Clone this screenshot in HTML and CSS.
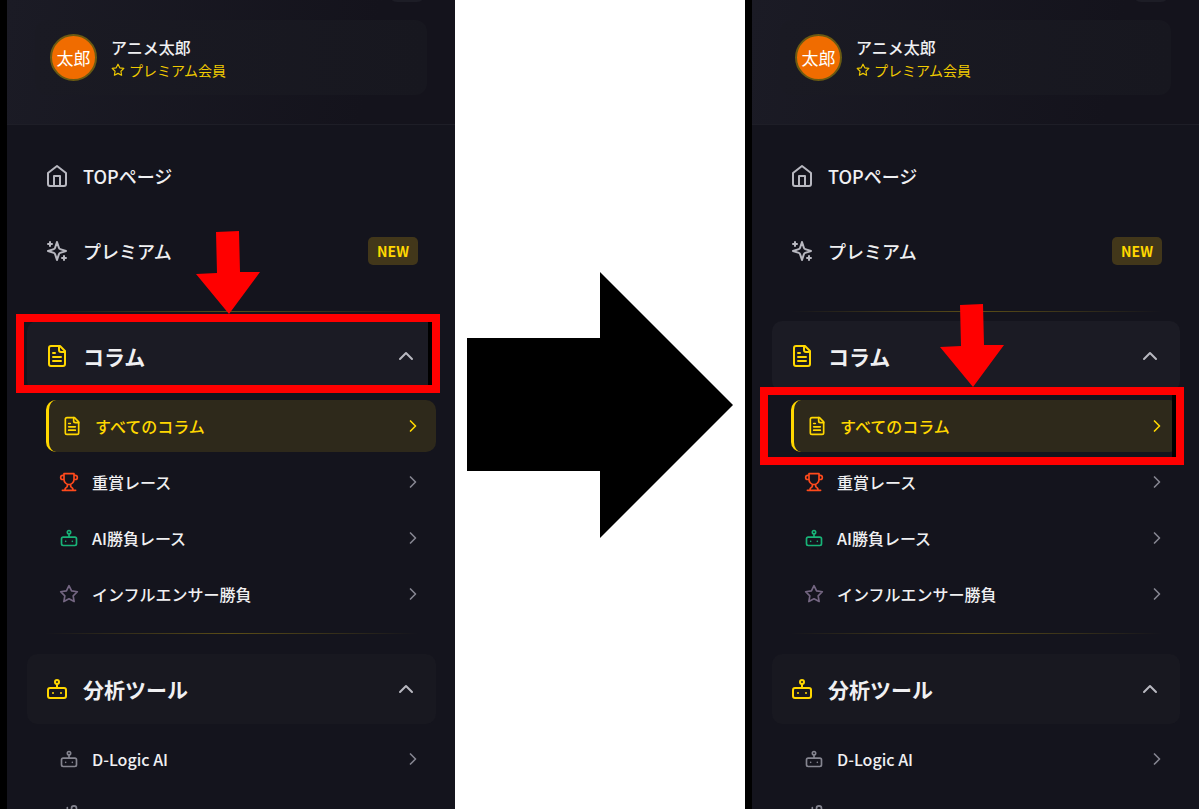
FILE: index.html
```html
<!DOCTYPE html>
<html lang="ja">
<head>
    <meta charset="UTF-8">
    <meta name="viewport" content="width=device-width, initial-scale=1.0">
    <title>コラムメニュー</title>
    <link rel="stylesheet" href="styles.css">
</head>
<body>
    <svg class="sprite" aria-hidden="true">
        <symbol id="home" viewBox="0 0 24 24"><path d="M3 9l9-7 9 7v11a2 2 0 0 1-2 2H5a2 2 0 0 1-2-2z"/><path d="M9 22V12h6v10"/></symbol>
        <symbol id="sparkles" viewBox="0 0 24 24"><path d="m12 3-1.9 5.8a2 2 0 0 1-1.3 1.3L3 12l5.8 1.9a2 2 0 0 1 1.3 1.3L12 21l1.9-5.800a2 2 0 0 1 1.3-1.3L21 12l-5.8-1.900a2 2 0 0 1-1.3-1.3Z"/><path d="M5 3v4M19 17v4M3 5h4M17 19h4"/></symbol>
        <symbol id="file" viewBox="0 0 24 24"><path d="M15 2H6a2 2 0 0 0-2 2v16a2 2 0 0 0 2 2h12a2 2 0 0 0 2-2V7Z"/><path d="M14 2v4a2 2 0 0 0 2 2h4M10 9H8M16 13H8M16 17H8"/></symbol>
        <symbol id="trophy" viewBox="0 0 24 24"><path d="M6 9H4.5a2.5 2.5 0 0 1 0-5H6M18 9h1.5a2.5 2.5 0 0 0 0-5H18M4 22h16M10 14.66V17c0 .55-.47.98-.97 1.21C7.85 18.75 7 20.24 7 22M14 14.66V17c0 .55.47.98.97 1.21C16.15 18.75 17 20.24 17 22M18 2H6v7a6 6 0 0 0 12 0V2Z"/></symbol>
        <symbol id="bot" viewBox="0 0 24 24"><rect x="3" y="11" width="18" height="10" rx="2"/><circle cx="12" cy="5" r="2"/><path d="M12 7v4M8 16h.01M16 16h.01"/></symbol>
        <symbol id="star" viewBox="0 0 24 24"><path d="m12 2 3.09 6.26L22 9.27l-5 4.87 1.18 6.88L12 17.77l-6.18 3.25L7 14.14 2 9.27l6.91-1.01z"/></symbol>
        <symbol id="chart" viewBox="0 0 24 24"><path d="M10 3v17M18 7v13M3 12v8"/><circle cx="18" cy="4" r="3"/></symbol>
        <symbol id="right" viewBox="0 0 24 24"><path d="m9 18 6-6-6-6"/></symbol>
        <symbol id="up" viewBox="0 0 24 24"><path d="m18 15-6-6-6 6"/></symbol>
        <symbol id="pointer" viewBox="0 0 64 83"><path d="M20 1 43 0l1 41h20L33 83 0 43l21-1z"/></symbol>
    </svg>

    <main class="steps">
        <section class="screen">
            <div class="sidebar">
                <header class="header">
                    <button class="close" aria-label="閉じる"></button>
                    <div class="profile">
                        <div class="avatar">太郎</div>
                        <div>
                            <div class="name">アニメ太郎</div>
                            <div class="rank"><svg class="icon"><use href="#star"/></svg>プレミアム会員</div>
                        </div>
                    </div>
                </header>
                <nav class="nav">
                    <a class="item" href="#"><svg class="icon"><use href="#home"/></svg>TOPページ</a>
                    <a class="item" href="#"><svg class="icon"><use href="#sparkles"/></svg>プレミアム<span class="badge">NEW</span></a>
                    <hr class="divider">
                    <div class="spot">
                        <button class="group open"><svg class="icon"><use href="#file"/></svg>コラム<svg class="icon arrow"><use href="#up"/></svg></button>
                        <div class="callout callout-group"><svg class="pointer"><use href="#pointer"/></svg></div>
                    </div>
                    <div class="sub">
                        <a class="sub-item active" href="#"><svg class="icon"><use href="#file"/></svg>すべてのコラム<svg class="icon arrow"><use href="#right"/></svg></a>
                        <a class="sub-item" href="#"><svg class="icon red"><use href="#trophy"/></svg>重賞レース<svg class="icon arrow"><use href="#right"/></svg></a>
                        <a class="sub-item" href="#"><svg class="icon green"><use href="#bot"/></svg>AI勝負レース<svg class="icon arrow"><use href="#right"/></svg></a>
                        <a class="sub-item" href="#"><svg class="icon purple"><use href="#star"/></svg>インフルエンサー勝負<svg class="icon arrow"><use href="#right"/></svg></a>
                    </div>
                    <hr class="divider divider-low">
                    <button class="group"><svg class="icon"><use href="#bot"/></svg>分析ツール<svg class="icon arrow"><use href="#up"/></svg></button>
                    <div class="sub">
                        <a class="sub-item" href="#"><svg class="icon"><use href="#bot"/></svg>D-Logic AI<svg class="icon arrow"><use href="#right"/></svg></a>
                        <a class="sub-item" href="#" aria-label="チャート"><svg class="icon"><use href="#chart"/></svg></a>
                    </div>
                </nav>
            </div>
        </section>

        <div class="next">
            <svg viewBox="0 0 266 266"><path d="M0 66h133V0l133 133-133 133v-67H0z"/></svg>
        </div>

        <section class="screen">
            <div class="sidebar">
                <header class="header">
                    <button class="close" aria-label="閉じる"></button>
                    <div class="profile">
                        <div class="avatar">太郎</div>
                        <div>
                            <div class="name">アニメ太郎</div>
                            <div class="rank"><svg class="icon"><use href="#star"/></svg>プレミアム会員</div>
                        </div>
                    </div>
                </header>
                <nav class="nav">
                    <a class="item" href="#"><svg class="icon"><use href="#home"/></svg>TOPページ</a>
                    <a class="item" href="#"><svg class="icon"><use href="#sparkles"/></svg>プレミアム<span class="badge">NEW</span></a>
                    <hr class="divider">
                    <button class="group open"><svg class="icon"><use href="#file"/></svg>コラム<svg class="icon arrow"><use href="#up"/></svg></button>
                    <div class="sub">
                        <div class="spot">
                            <a class="sub-item active" href="#"><svg class="icon"><use href="#file"/></svg>すべてのコラム<svg class="icon arrow"><use href="#right"/></svg></a>
                            <div class="callout callout-item"><svg class="pointer"><use href="#pointer"/></svg></div>
                        </div>
                        <a class="sub-item" href="#"><svg class="icon red"><use href="#trophy"/></svg>重賞レース<svg class="icon arrow"><use href="#right"/></svg></a>
                        <a class="sub-item" href="#"><svg class="icon green"><use href="#bot"/></svg>AI勝負レース<svg class="icon arrow"><use href="#right"/></svg></a>
                        <a class="sub-item" href="#"><svg class="icon purple"><use href="#star"/></svg>インフルエンサー勝負<svg class="icon arrow"><use href="#right"/></svg></a>
                    </div>
                    <hr class="divider divider-low">
                    <button class="group"><svg class="icon"><use href="#bot"/></svg>分析ツール<svg class="icon arrow"><use href="#up"/></svg></button>
                    <div class="sub">
                        <a class="sub-item" href="#"><svg class="icon"><use href="#bot"/></svg>D-Logic AI<svg class="icon arrow"><use href="#right"/></svg></a>
                        <a class="sub-item" href="#" aria-label="チャート"><svg class="icon"><use href="#chart"/></svg></a>
                    </div>
                </nav>
            </div>
        </section>
    </main>
</body>
</html>
```
FILE: styles.css
```css
* {
    box-sizing: border-box;
}
body {
    margin: 0;
    background-color: white;
    color: #f0f0f2;
    font-family: "Noto Sans CJK JP", sans-serif;
    font-size: 16px;
}
a {
    color: inherit;
    text-decoration: none;
}
button {
    border: none;
    color: inherit;
    font-family: inherit;
    text-align: left;
    cursor: pointer;
}
.sprite {
    display: none;
}
.steps {
    display: grid;
    grid-template-columns: 455fr 290fr 454fr;
    height: 100vh;
    padding-right: 1px;
    overflow: hidden;
}
.screen {
    padding-left: 7px;
    background-color: black;
    overflow: hidden;
}
.sidebar {
    min-height: 100%;
    background-color: #14141d;
}
.icon {
    flex: none;
    width: 24px;
    height: 24px;
    fill: none;
    stroke: currentColor;
    stroke-width: 2;
    stroke-linecap: round;
    stroke-linejoin: round;
}

/* profile */
.header {
    display: flow-root;
    padding: 0 28px 29px;
    border-bottom: 1px solid #1e1e27;
    background: linear-gradient(100deg, #1b1b25, #14131c 80%);
}
.close {
    display: block;
    width: 36px;
    height: 36px;
    margin: -34px 2px 0 auto;
    border-radius: 8px;
    background-color: #1d1d26;
}
.profile {
    display: flex;
    align-items: center;
    gap: 14px;
    height: 75px;
    margin-top: 18px;
    padding: 0 15px;
    border-radius: 12px;
    background: linear-gradient(90deg, #1a1a23, #17171f);
}
.avatar {
    display: flex;
    align-items: center;
    justify-content: center;
    width: 47px;
    height: 47px;
    border: 2px solid #6a5a12;
    border-radius: 50%;
    background-color: #f06c00;
    color: white;
    font-size: 17px;
}
.name {
    font-weight: 500;
    line-height: 24px;
}
.rank {
    display: flex;
    align-items: center;
    gap: 4px;
    color: #f0ca00;
    font-size: 14px;
    line-height: 22px;
}
.rank .icon {
    width: 14px;
    height: 14px;
}

/* menu */
.nav {
    padding: 17px 19px 0 20px;
}
.item {
    display: flex;
    align-items: center;
    gap: 14px;
    height: 68px;
    margin-bottom: 7px;
    padding: 0 18px;
    font-size: 18px;
    font-weight: 500;
}
.item .icon {
    color: #b8b8c0;
}
.badge {
    margin-left: auto;
    padding: 0 9px;
    border-radius: 5px;
    background-color: #42371a;
    color: #ffd700;
    font-size: 14px;
    font-weight: 700;
    line-height: 28px;
}
.divider {
    height: 1px;
    margin: 26px 18px 9px;
    border: none;
    background: linear-gradient(90deg, transparent, #5c4e16, transparent);
}
.divider-low {
    margin: 13px 18px 20px;
}
.group {
    display: flex;
    align-items: center;
    gap: 14px;
    width: 100%;
    height: 70px;
    padding: 0 18px;
    border-radius: 10px;
    background-color: #181820;
    font-size: 21px;
    font-weight: 700;
}
.group.open {
    background-color: #1b1b24;
}
.group .icon {
    color: #ffd700;
}
.group .arrow {
    margin-left: auto;
    color: #b8b8c0;
}
.sub {
    display: flex;
    flex-direction: column;
    gap: 4px;
    margin: 9px 0 0 19px;
}
.sub-item {
    display: flex;
    align-items: center;
    gap: 13px;
    height: 52px;
    padding: 0 13px;
    border-radius: 10px;
    font-weight: 500;
}
.sub-item .icon {
    width: 20px;
    height: 20px;
    color: #858590;
}
.sub-item .arrow {
    margin-left: auto;
}
.sub-item .red {
    color: #ff4a1c;
}
.sub-item .green {
    color: #18b478;
}
.sub-item .purple {
    color: #746682;
}
.sub-item.active {
    border-left: 3px solid #ffd700;
    background-color: #2e291b;
    color: #ffd700;
}
.sub-item.active .icon {
    color: #ffd700;
}

/* red frames and arrows over the menu */
.spot {
    position: relative;
}
.callout {
    position: absolute;
    border: 8px solid red;
    pointer-events: none;
}
.callout::after {
    content: "";
    position: absolute;
    inset: 0 0 0 auto;
    width: 4px;
    background-color: black;
}
.callout-group {
    inset: -7px -4px -2px -11px;
}
.callout-item {
    inset: -13px -4px -13px -31px;
}
.pointer {
    position: absolute;
    bottom: calc(100% + 8px);
    left: 50%;
    width: 64px;
    height: 83px;
    transform: translateX(-50%);
    fill: red;
}

.next {
    display: flex;
    align-items: center;
    padding: 0 12px;
}
.next svg {
    width: 100%;
}
```
